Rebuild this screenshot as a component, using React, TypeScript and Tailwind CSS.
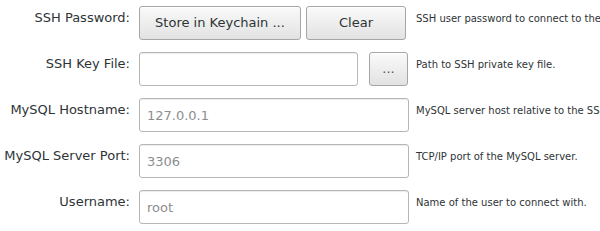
const labelCls =
  'w-[130px] shrink-0 text-right text-[13px] leading-[24px] text-[#2e3436] whitespace-nowrap'
const descCls =
  'ml-[7px] pt-[6px] text-[10px] leading-[14px] text-[#2e3436] whitespace-nowrap'
const btnCls =
  'h-[34px] rounded-[3px] border border-[#a6a6a6] bg-gradient-to-b from-[#fafafa] to-[#e2e2e2] text-[13px] text-[#2e3436] shadow-[inset_0_1px_0_#ffffff]'
const inputCls =
  'h-[34px] rounded-[3px] border border-[#b6b6b3] bg-white px-[7px] text-[13px] text-[#2e3436] placeholder:text-[#8b8e8f] shadow-[inset_0_2px_1px_-1px_rgba(0,0,0,0.08)] outline-none'

function Row({ label, desc, children }: { label: string; desc: string; children: React.ReactNode }) {
  return (
    <div className="flex h-[34px] items-start">
      <div className={labelCls}>{label}</div>
      <div className="ml-[9px] flex w-[270px] shrink-0 items-center">{children}</div>
      <div className={descCls}>{desc}</div>
    </div>
  )
}

export default function App() {
  return (
    <div
      className="h-[231px] w-[600px] overflow-hidden bg-white pt-[6px]"
      style={{ fontFamily: '"DejaVu Sans", sans-serif' }}
    >
      <div className="flex flex-col gap-[12px]">
        <Row label="SSH Password:" desc="SSH user password to connect to the SSH tunnel.">
          <button className={btnCls + ' w-[162px]'}>Store in Keychain ...</button>
          <button className={btnCls + ' ml-[5px] w-[100px]'}>Clear</button>
        </Row>
        <Row label="SSH Key File:" desc="Path to SSH private key file.">
          <input className={inputCls + ' w-[219px]'} />
          <button className={btnCls + ' ml-[11px] w-[39px] text-[10px] text-[#555]'}>...</button>
        </Row>
        <Row label="MySQL Hostname:" desc="MySQL server host relative to the SSH tunnel.">
          <input className={inputCls + ' w-[270px]'} placeholder="127.0.0.1" />
        </Row>
        <Row label="MySQL Server Port:" desc="TCP/IP port of the MySQL server.">
          <input className={inputCls + ' w-[270px]'} placeholder="3306" />
        </Row>
        <Row label="Username:" desc="Name of the user to connect with.">
          <input className={inputCls + ' w-[270px]'} placeholder="root" />
        </Row>
      </div>
    </div>
  )
}
